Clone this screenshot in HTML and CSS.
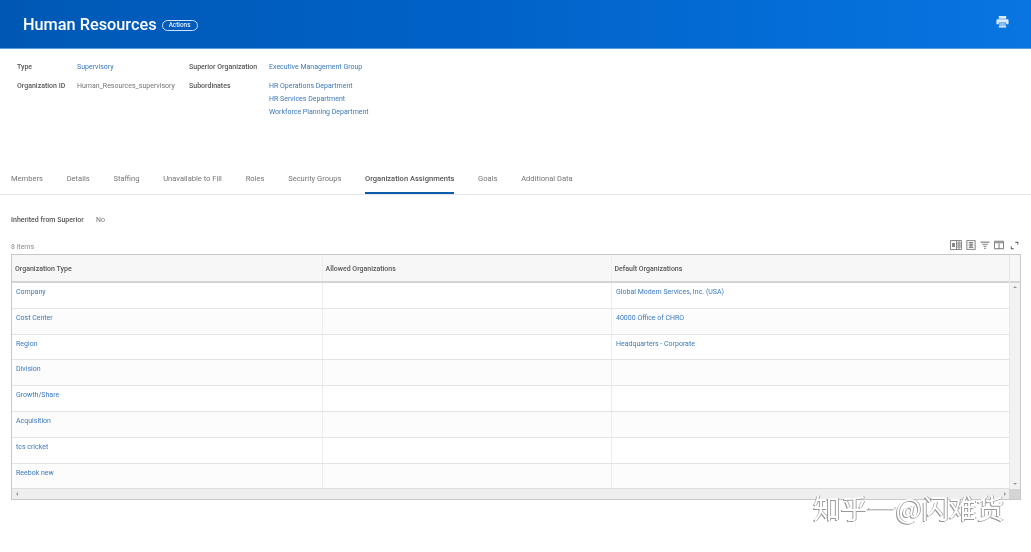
FILE: index.html
```html
<!DOCTYPE html>
<html lang="en">
<head>
<meta charset="utf-8">
<title>Human Resources</title>
<link rel="stylesheet" href="styles.css">
</head>
<body>
<div class="page">
<header class="banner">
  <div class="banner-left">
    <h1 class="title">Human Resources</h1>
    <button class="actions">Actions</button>
  </div>
  <svg class="print" viewBox="0 0 14 14" width="13" height="13" aria-hidden="true">
    <path fill="#dcebfc" d="M3 1h8v3H3zM1.500 4.500h11a1 1 0 0 1 1 1V10H11V8H3v2H.5V5.500a1 1 0 0 1 1-1z"/>
    <path fill="#8fbdf2" d="M3.500 8.500h7V13h-7z"/>
    <path fill="#dcebfc" d="M3 12h8v1.500H3z"/>
  </svg>
</header>

<section class="facts">
  <div class="fact-col col-a">
    <div class="fact"><span class="label la">Type</span><a class="link">Supervisory</a></div>
    <div class="fact"><span class="label la">Organization ID</span><span class="value">Human_Resources_supervisory</span></div>
  </div>
  <div class="fact-col">
    <div class="fact"><span class="label lb">Superior Organization</span><a class="link">Executive Management Group</a></div>
    <div class="fact"><span class="label lb">Subordinates</span>
      <div class="stack">
        <a class="link">HR Operations Department</a>
        <a class="link">HR Services Department</a>
        <a class="link">Workforce Planning Department</a>
      </div>
    </div>
  </div>
</section>

<nav class="tabs">
  <a class="tab">Members</a>
  <a class="tab">Details</a>
  <a class="tab">Staffing</a>
  <a class="tab">Unavailable to Fill</a>
  <a class="tab">Roles</a>
  <a class="tab">Security Groups</a>
  <a class="tab active">Organization Assignments</a>
  <a class="tab">Goals</a>
  <a class="tab">Additional Data</a>
</nav>

<div class="inherited"><span class="label inh">Inherited from Superior</span><span class="value">No</span></div>

<div class="toolbar">
  <span class="count">8 items</span>
  <div class="tools">
    <svg class="tool t12" viewBox="0 0 12 12"><path fill="none" stroke="#888" d="M.5 1.500h11v9H.5zM6.500 1.500v9M9 1.500v9M6.500 4h5M6.500 6h5M6.500 8h5"/><path fill="#888" d="M2 4h3v4H2z"/></svg>
    <svg class="tool t10 boxed" viewBox="0 0 12 12"><path fill="none" stroke="#777" d="M1 .5h10v11H1zM6 3v6M3.500 3h5M3.500 5h5M3.500 7h5M3.500 9h5"/></svg>
    <svg class="tool t10" viewBox="0 0 12 12"><path fill="none" stroke="#888" stroke-width="1.300" d="M.5 2.500h11M2.500 5h7M4 7.500h4M5 10h2"/></svg>
    <svg class="tool t10" viewBox="0 0 12 12"><path fill="none" stroke="#777" stroke-width="1.200" d="M.5 1.500h11v9H.5zM6 4v6.500"/><path fill="#999" d="M.5 1.500h11V4H.5z"/></svg>
    <svg class="tool t9" viewBox="0 0 12 12"><path fill="#555" d="M7 1h4v4H9.800V2.200H7zM1 7h1.200v2.800H5V11H1z"/></svg>
  </div>
</div>

<div class="grid-wrap">
  <div class="grid-main">
    <div class="grid-table">
      <div class="row head">
        <div class="cell c1">Organization Type</div>
        <div class="cell c2">Allowed Organizations</div>
        <div class="cell c3">Default Organizations</div>
      </div>
      <div class="row"><div class="cell c1"><a class="link">Company</a></div><div class="cell c2"></div><div class="cell c3"><a class="link">Global Modern Services, Inc. (USA)</a></div></div>
      <div class="row alt"><div class="cell c1"><a class="link">Cost Center</a></div><div class="cell c2"></div><div class="cell c3"><a class="link">40000 Office of CHRO</a></div></div>
      <div class="row"><div class="cell c1"><a class="link">Region</a></div><div class="cell c2"></div><div class="cell c3"><a class="link">Headquarters - Corporate</a></div></div>
      <div class="row alt"><div class="cell c1"><a class="link">Division</a></div><div class="cell c2"></div><div class="cell c3"></div></div>
      <div class="row"><div class="cell c1"><a class="link">Growth/Share</a></div><div class="cell c2"></div><div class="cell c3"></div></div>
      <div class="row alt"><div class="cell c1"><a class="link">Acquisition</a></div><div class="cell c2"></div><div class="cell c3"></div></div>
      <div class="row"><div class="cell c1"><a class="link">tcs cricket</a></div><div class="cell c2"></div><div class="cell c3"></div></div>
      <div class="row alt last"><div class="cell c1"><a class="link">Reebok new</a></div><div class="cell c2"></div><div class="cell c3"></div></div>
    </div>
    <div class="vscroll">
      <div class="vhead"></div>
      <div class="varrow up"></div>
      <div class="vtrack"></div>
      <div class="varrow down"></div>
    </div>
  </div>
  <div class="hscroll">
    <span class="harrow left"></span>
    <span class="harrow right"></span>
    <span class="corner"></span>
  </div>
</div>

<div class="watermark">知乎一@闪难货</div>
</div>
</body>
</html>
```

FILE: styles.css
```css
* { box-sizing: border-box; }

html, body { margin: 0; height: 552px; overflow: hidden; background: #fff; }

.page {
  position: relative;
  height: 552px;
  will-change: transform;
  filter: blur(0.35px);
  color: #555;
  font-family: Roboto, "Liberation Sans", sans-serif;
  font-size: 7px;
  line-height: 10px;
}

.link { color: #3a78bd; }

.banner {
  height: 49px;
  display: flex;
  justify-content: space-between;
  padding: 15px 22px 0 23px;
  background: linear-gradient(90deg, #0058b4 0%, #0062c8 45%, #0875e1 100%);
  border-bottom: 1px solid #5a9ae0;
}

.banner-left { display: flex; align-items: center; gap: 5px; height: 20px; }

.title {
  margin: 0;
  color: #fff;
  font-size: 16.300px;
  line-height: 20px;
  font-weight: 500;
}

.actions {
  height: 11px;
  width: 36px;
  padding: 0;
  margin-top: 1px;
  border: 1px solid #cfe2f8;
  border-radius: 6px;
  background: transparent;
  color: #e4effb;
  font: 500 6.400px/9px Roboto, sans-serif;
}

.print { display: block; }

.facts {
  display: flex;
  padding: 13px 0 0 17px;
  height: 110px;
}

.fact-col { display: flex; flex-direction: column; gap: 9px; }
.col-a { width: 172px; }

.fact { display: flex; }

.label { color: #565656; font-weight: 500; }
.la { width: 60px; }
.lb { width: 80px; }
.value { color: #757575; }

.stack { display: flex; flex-direction: column; gap: 3px; }

.tabs {
  height: 36px;
  display: flex;
  gap: 23.750px;
  padding-left: 11px;
  border-bottom: 1px solid #e4e4e4;
  font-size: 7.550px;
}

.tab {
  height: 35px;
  padding-top: 15px;
  color: #757575;
}

.tab.active {
  color: #565656;
  font-weight: 500;
  border-bottom: 2px solid #0b5cad;
}

.inherited {
  display: flex;
  padding: 20px 0 0 11px;
  height: 46px;
}

.inh { width: 85px; }

.toolbar {
  height: 13px;
  display: flex;
  justify-content: space-between;
  align-items: flex-end;
  padding: 0 12px 0 11px;
}

.count { color: #8a8a8a; padding-bottom: 2px; }

.tools { display: flex; gap: 4px; align-items: center; padding-bottom: 3px; }

.tool { display: block; }
.t12 { width: 12px; height: 12px; }
.t10 { width: 10px; height: 10px; }
.t9 { width: 9px; height: 9px; margin-left: 2px; }
.boxed { background: #f1f1f1; }

.grid-wrap {
  width: 1010px;
  margin-left: 11px;
  border: 1px solid #c8c8c8;
}

.grid-main { display: flex; }
.grid-table { flex: 1; }

.row {
  display: grid;
  grid-template-columns: 310.500px 289px 1fr;
  height: 25.800px;
  border-bottom: 1px solid #e4e4e4;
  background: #fff;
}

.row.alt { background: #fcfcfc; }
.row.last { border-bottom-color: #ddd; }

.row.head {
  height: 28px;
  background: #f7f7f7;
  border-bottom: 2px solid #d4d4d4;
  color: #565656;
  font-weight: 500;
}

.cell {
  padding: 4px 0 0 4px;
  border-right: 1px solid #eee;
}

.head .cell { padding: 9px 0 0 3px; }
.cell.c3 { border-right: 0; padding-left: 4.500px; }
.head .cell.c3 { padding-left: 3px; }

.vscroll {
  width: 11px;
  display: flex;
  flex-direction: column;
  background: #f2f2f2;
  border-left: 1px solid #e8e8e8;
}

.vhead { height: 28px; background: #f7f7f7; border-bottom: 2px solid #d4d4d4; }
.vtrack { flex: 1; }

.varrow { height: 9px; position: relative; }

.varrow::after {
  content: "";
  position: absolute;
  left: 3px;
  top: 3px;
  border-left: 2px solid transparent;
  border-right: 2px solid transparent;
}

.varrow.up::after { border-bottom: 2px solid #999; }
.varrow.down::after { border-top: 2px solid #999; }

.hscroll {
  height: 10px;
  display: flex;
  align-items: center;
  justify-content: space-between;
  background: #eeeeee;
  padding-left: 4px;
}

.harrow { border-top: 2px solid transparent; border-bottom: 2px solid transparent; }
.harrow.left { border-right: 2px solid #999; }
.harrow.right { border-left: 2px solid #999; margin-left: auto; margin-right: 3px; }
.corner { width: 11px; height: 10px; background: #d4d4d4; }

.watermark {
  position: absolute;
  left: 813px;
  top: 488px;
  color: #fff;
  font-family: "Noto Sans CJK SC", sans-serif;
  font-size: 27.500px;
  line-height: 38px;
  white-space: nowrap;
  text-shadow: -1px 1px 0 #999, 1px 0 0 #aaa;
}
```
